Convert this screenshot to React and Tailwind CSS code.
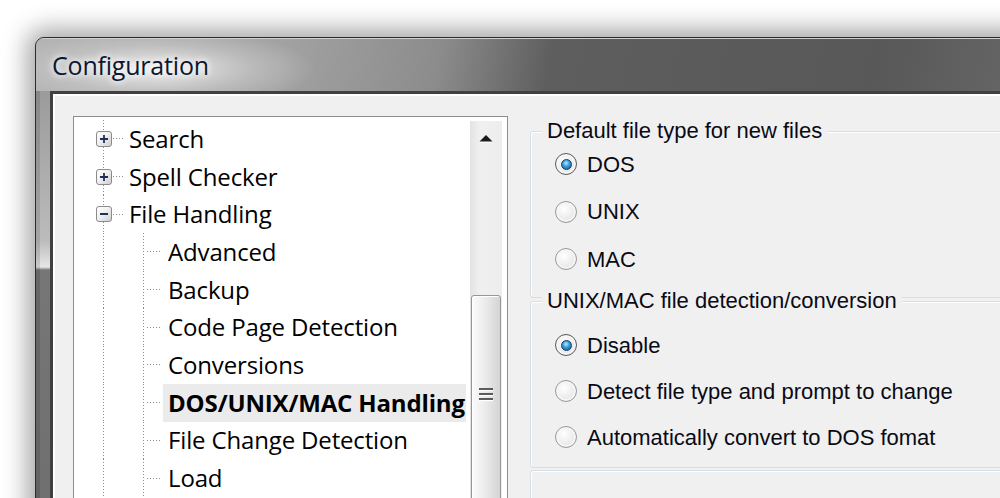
const treeRows = [
  { label: "Search", level: 0, expander: "plus" },
  { label: "Spell Checker", level: 0, expander: "plus" },
  { label: "File Handling", level: 0, expander: "minus" },
  { label: "Advanced", level: 1 },
  { label: "Backup", level: 1 },
  { label: "Code Page Detection", level: 1 },
  { label: "Conversions", level: 1 },
  { label: "DOS/UNIX/MAC Handling", level: 1, selected: true },
  { label: "File Change Detection", level: 1 },
  { label: "Load", level: 1 },
];

const vline =
  "bg-[repeating-linear-gradient(to_bottom,#8c8c8c_0px,#8c8c8c_1px,transparent_1px,transparent_3px)] bg-no-repeat";
const hdots =
  "h-px bg-[repeating-linear-gradient(to_right,#8c8c8c_0px,#8c8c8c_1px,transparent_1px,transparent_3px)]";

function Expander({ type }) {
  return (
    <span className="w-[16px] h-[16px] rounded-[3px] border border-[#8b8b8b] bg-[linear-gradient(135deg,#ffffff_0%,#f0f0f0_45%,#cfcfcf_100%)] flex items-center justify-center">
      <svg width="10" height="10" viewBox="0 0 10 10">
        <path d="M1 5H9" stroke="#1d2f5a" strokeWidth="1.8" />
        {type === "plus" && <path d="M5 1V9" stroke="#1d2f5a" strokeWidth="1.8" />}
      </svg>
    </span>
  );
}

function TreeRow({ row }) {
  return (
    <div className="flex h-[37.7px] items-stretch">
      <div className="w-[20px] shrink-0" />
      <div className={`w-[17px] shrink-0 flex items-center justify-center ${vline} bg-[length:1px_100%] bg-[position:8px_0]`}>
        {row.expander && <Expander type={row.expander} />}
      </div>
      {row.level === 0 ? (
        <div className="flex items-center">
          <div className={`w-[10px] ml-[1px] ${hdots}`} />
        </div>
      ) : (
        <div className={`w-[50px] shrink-0 flex items-center pl-[35px] ${vline} bg-[length:1px_100%] bg-[position:31px_0]`}>
          <div className={`w-[14px] ${hdots}`} />
        </div>
      )}
      <div
        className={`flex items-center whitespace-nowrap ml-[1px] pl-[5px] pr-[1px] ${
          row.selected ? "bg-[#ebebeb] font-bold" : ""
        }`}
      >
        {row.label}
      </div>
    </div>
  );
}

function Radio({ checked }) {
  return (
    <span
      className={`w-[22px] h-[22px] shrink-0 rounded-full border flex items-center justify-center ${
        checked
          ? "border-[#5a5a5a] bg-[radial-gradient(circle_at_40%_35%,#ffffff_0%,#e9e9e9_60%,#cfcfcf_100%)]"
          : "border-[#9a9a9a] bg-[radial-gradient(circle_at_40%_35%,#ffffff_0%,#ececec_55%,#d2d2d2_100%)]"
      } shadow-[inset_0_0_0_2px_#f6f6f6]`}
    >
      {checked && (
        <span className="w-[11px] h-[11px] rounded-full border border-[#173a63] bg-[radial-gradient(circle_at_45%_35%,#bfe9ff_0%,#3aa0de_40%,#0f4e8a_100%)]" />
      )}
    </span>
  );
}

function RadioRow({ label, checked }) {
  return (
    <div className="flex h-[40px] items-center gap-[10px]">
      <Radio checked={checked} />
      <span>{label}</span>
    </div>
  );
}

function Scrollbar() {
  return (
    <div className="w-[32px] shrink-0 flex flex-col bg-[linear-gradient(to_right,#e3e3e3,#f0f0f0_30%,#ededed)] mt-[1px]">
      <div className="h-[30px] flex items-center justify-center pt-[4px]">
        <svg width="16" height="9" viewBox="0 0 16 9">
          <path d="M1 8.5L8 1.5L15 8.5Z" fill="#ffffff" />
          <path d="M1.5 7.5L8 1L14.5 7.5Z" fill="#1a1a1a" />
        </svg>
      </div>
      <div className="h-[144px]" />
      <div className="flex-1 mx-[1px] rounded-t-[3px] border border-[#969696] bg-[linear-gradient(to_right,#fbfbfb,#ececec_45%,#d4d4d4)] shadow-[inset_1px_1px_0_#ffffff] flex justify-center pt-[91px]">
        <svg width="18" height="16" viewBox="0 0 18 16">
          <path d="M2 2H16 M2 7H16 M2 12H16" stroke="#ffffff" strokeWidth="1.5" transform="translate(0 1.5)" />
          <path d="M2 2H16 M2 7H16 M2 12H16" stroke="#2c2c2c" strokeWidth="1.6" />
        </svg>
      </div>
    </div>
  );
}

export default function App() {
  return (
    <div className="w-[1000px] h-[498px] overflow-hidden bg-white pt-[37px] pl-[35px]">
      <div className="w-[1120px] h-[600px] rounded-tl-[9px] border border-[#2b2b2b] shadow-[0_0_24px_8px_rgba(0,0,0,0.35)] flex flex-col overflow-hidden bg-[#6e6e6e]">
        <div className="h-[53px] shrink-0 flex items-center pl-[16px] pt-[2px] border-t border-[#d0d0d0] bg-[radial-gradient(ellipse_160px_40px_at_120px_30px,rgba(240,240,240,0.95)_0%,rgba(205,205,205,0.55)_60%,rgba(180,180,180,0)_100%),linear-gradient(100deg,#b3b3b3_0%,#a2a2a2_22%,#8c8c8c_36%,#5e5e5e_46%,#585858_75%,#666666_88%,#575757_100%)]">
          <span className="text-[25px] text-[#0c1730] font-['Open_Sans',sans-serif] tracking-[-0.2px] [text-shadow:0_0_10px_#ffffff,0_0_6px_#ffffff]">
            Configuration
          </span>
        </div>
        <div className="flex flex-1">
          <div className="w-[14px] shrink-0 bg-[linear-gradient(to_bottom,#9b9b9b_0px,#bcbcbc_150px,#e6e6e6_176px,#767676_179px,#6c6c6c_100%)] shadow-[inset_4px_0_0_rgba(0,0,0,0.12)]" />
          <div className="flex-1 border-t-[3px] border-l-[3px] border-[#404040] bg-[#f0f0f0] shadow-[inset_2px_2px_0_#ffffff] flex items-start pl-[20px] pt-[22px]">
            <div className="w-[435px] h-[420px] shrink-0 border border-[#8a8d92] bg-white flex pl-[1px] pr-[5px] pt-[3px] font-['Open_Sans',sans-serif] text-[24px] text-black tracking-[-0.15px]">
              <div className="flex-1 flex flex-col overflow-hidden">
                {treeRows.map((row) => (
                  <TreeRow key={row.label} row={row} />
                ))}
              </div>
              <Scrollbar />
            </div>
            <div className="ml-[22px] pt-[3px] w-[600px] flex flex-col font-['Liberation_Sans',Arial,sans-serif] text-[22px] text-[#0a0a14]">
              <fieldset className="border border-[#d5dfe5] rounded-[3px] shadow-[inset_1px_1px_0_#ffffff] pb-[18px]">
                <legend className="ml-[11px] px-[5px] leading-[24px] bg-[#f0f0f0]">Default file type for new files</legend>
                <div className="flex flex-col gap-[7.5px] pt-[1px] pl-[24px]">
                  <RadioRow label="DOS" checked />
                  <RadioRow label="UNIX" />
                  <RadioRow label="MAC" />
                </div>
              </fieldset>
              <fieldset className="-mt-[9px] border border-[#d5dfe5] rounded-[3px] shadow-[inset_1px_1px_0_#ffffff] pb-[10px]">
                <legend className="ml-[11px] px-[5px] leading-[24px] bg-[#f0f0f0]">UNIX/MAC file detection/conversion</legend>
                <div className="flex flex-col gap-[6px] pt-[12px] pl-[24px]">
                  <RadioRow label="Disable" checked />
                  <RadioRow label="Detect file type and prompt to change" />
                  <RadioRow label="Automatically convert to DOS fomat" />
                </div>
              </fieldset>
              <fieldset className="mt-[2px] h-[80px] border border-[#d5dfe5] rounded-[3px] shadow-[inset_1px_1px_0_#ffffff]" />
            </div>
          </div>
        </div>
      </div>
    </div>
  );
}
